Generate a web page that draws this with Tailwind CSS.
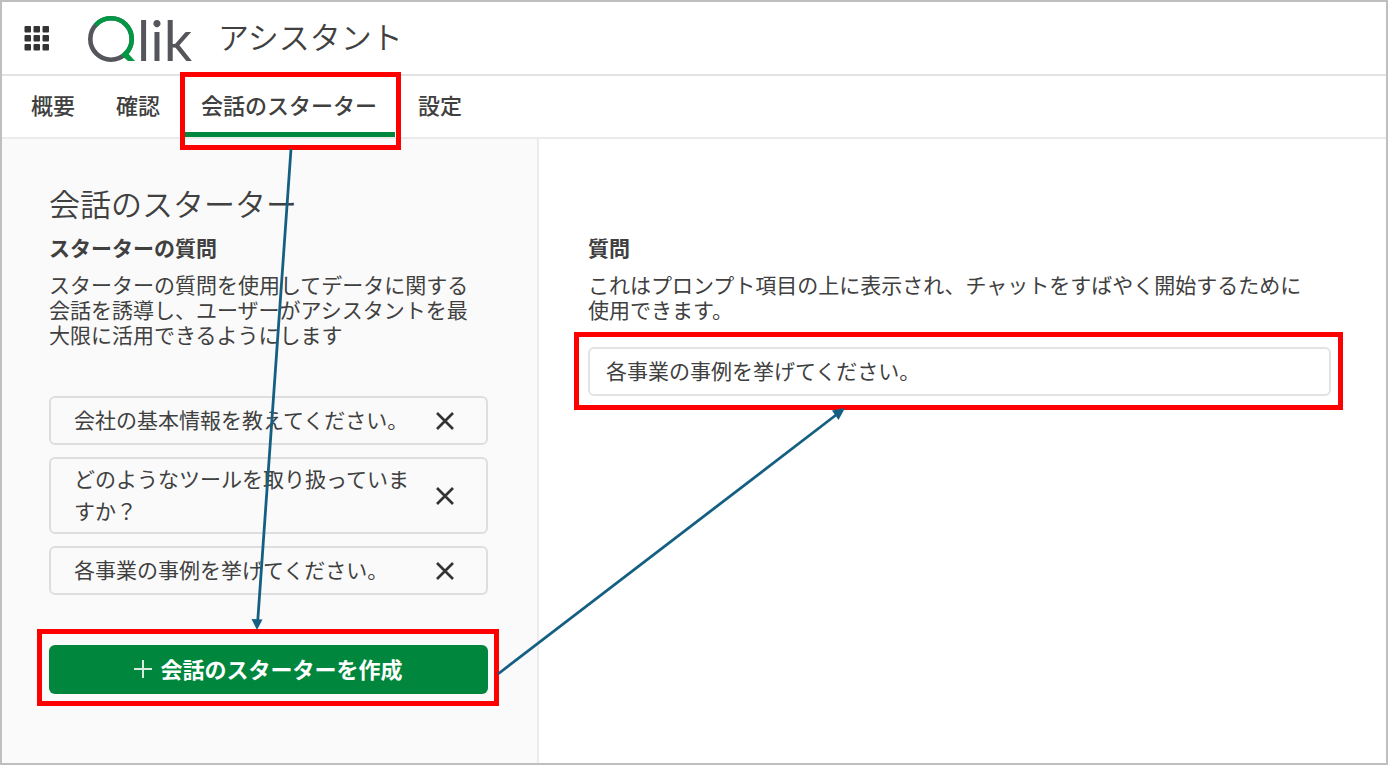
<!DOCTYPE html>
<html lang="ja">
  <head>
    <meta charset="utf-8" />
    <meta name="viewport" content="initial-scale=1, width=device-width" />
    <script src="https://cdn.jsdelivr.net/npm/@tailwindcss/browser@4"></script>
    <title>Qlik アシスタント</title>
  </head>

  <body
    class="relative flex min-h-screen flex-col border-2 border-[#bfbfbf] bg-white font-['Noto_Sans_CJK_JP',sans-serif] text-[21px] text-[#404040]"
  >
    <!-- HEADER -->
    <header
      class="flex h-[74px] items-center border-b-2 border-[#e3e3e3] pl-[22px]"
    >
      <button type="button" aria-label="メニュー">
        <svg width="26" height="26" viewBox="0 0 26 26" fill="#333">
          <rect x="0.5" y="1" width="6.5" height="6.5" rx="1" />
          <rect x="9.5" y="1" width="6.5" height="6.5" rx="1" />
          <rect x="18.5" y="1" width="6.5" height="6.5" rx="1" />
          <rect x="0.5" y="10" width="6.5" height="6.5" rx="1" />
          <rect x="9.5" y="10" width="6.5" height="6.5" rx="1" />
          <rect x="18.5" y="10" width="6.5" height="6.5" rx="1" />
          <rect x="0.5" y="19" width="6.5" height="6.5" rx="1" />
          <rect x="9.5" y="19" width="6.5" height="6.5" rx="1" />
          <rect x="18.5" y="19" width="6.5" height="6.5" rx="1" />
        </svg>
      </button>
      <a href="#" class="ml-9" aria-label="Qlik">
        <svg width="108" height="72" viewBox="0 -11 108 72" fill="none">
          <circle cx="25" cy="26" r="20.7" stroke="#54565b" stroke-width="4.6" />
          <path
            d="M9.5 12.3A20.7 20.7 0 1 1 38.5 41.7"
            stroke="#009845"
            stroke-width="4.6"
          />
          <path d="M35 42L39.5 37.5L49 48H42Z" fill="#009845" />
          <text x="51" y="48" fill="#54565b" class="font-[Lato] text-[56px]">lik</text>
        </svg>
      </a>
      <h1 class="ml-6 pb-1 text-[31px] font-[350] leading-10">アシスタント</h1>
    </header>

    <!-- TABS -->
    <nav
      class="flex h-[63px] gap-[5px] border-b-2 border-[#ebebeb] pl-[11px] text-[22px] font-medium text-[#404040]"
    >
      <a href="#" class="flex items-center px-[18px] pb-1">概要</a>
      <a href="#" class="flex items-center px-[18px] pb-1">確認</a>
      <a
        href="#"
        class="relative flex items-center px-[18px] pb-1 shadow-[inset_0_-5px_0_#00873d]"
      >
        会話のスターター
        <span
          class="absolute -top-1 -right-[6px] -bottom-[13px] -left-[3px] border-5 border-[#ff0000]"
        ></span>
      </a>
      <a href="#" class="flex items-center px-[18px] pb-1">設定</a>
    </nav>

    <div class="flex flex-1">
      <!-- STARTERS -->
      <aside
        class="w-[537px] shrink-0 border-r-2 border-[#ebebeb] bg-[#fafafa] pt-11 pr-[49px] pb-12 pl-[47px]"
      >
        <h2 class="text-[31px] font-[350] leading-10">会話のスターター</h2>
        <h3 class="mt-1 font-bold leading-10">スターターの質問</h3>
        <p class="mt-[5px] pr-2 leading-[25px]">
          スターターの質問を使用してデータに関する会話を誘導し、ユーザーがアシスタントを最大限に活用できるようにします
        </p>

        <ul class="mt-[49px] space-y-3">
          <li
            class="flex min-h-[49px] items-center rounded-md border-2 border-[#dedede] px-[23px]"
          >
            <span class="flex-1 pb-1 leading-8">会社の基本情報を教えてください。</span>
            <button
              type="button"
              class="flex w-9 justify-center"
              aria-label="削除"
            >
              <svg width="18" height="18" viewBox="0 0 18 18" stroke="#333" stroke-width="2.6">
                <path d="M1 1L17 17M17 1L1 17" />
              </svg>
            </button>
          </li>
          <li
            class="flex min-h-[77px] items-center rounded-md border-2 border-[#dedede] px-[23px]"
          >
            <span class="flex-1 pb-1 leading-8"
              >どのようなツールを取り扱っていますか？</span
            >
            <button
              type="button"
              class="flex w-9 justify-center"
              aria-label="削除"
            >
              <svg width="18" height="18" viewBox="0 0 18 18" stroke="#333" stroke-width="2.6">
                <path d="M1 1L17 17M17 1L1 17" />
              </svg>
            </button>
          </li>
          <li
            class="flex min-h-[49px] items-center rounded-md border-2 border-[#dedede] px-[23px]"
          >
            <span class="flex-1 pb-1 leading-8">各事業の事例を挙げてください。</span>
            <button
              type="button"
              class="flex w-9 justify-center"
              aria-label="削除"
            >
              <svg width="18" height="18" viewBox="0 0 18 18" stroke="#333" stroke-width="2.6">
                <path d="M1 1L17 17M17 1L1 17" />
              </svg>
            </button>
          </li>
        </ul>

        <div class="relative mt-[50px]">
          <button
            type="button"
            class="flex h-[49px] w-full items-center justify-center gap-2 rounded-md bg-[#00873d] pb-[2px] text-[22px] font-bold text-white"
          >
            <svg width="18" height="18" viewBox="0 0 18 18" stroke="#d5ecdf" stroke-width="2">
              <path d="M9 0V18M0 9H18" />
            </svg>
            会話のスターターを作成
          </button>
          <span
            class="pointer-events-none absolute -top-4 -right-[11px] -bottom-3 -left-3 border-5 border-[#ff0000]"
          ></span>
        </div>
      </aside>

      <!-- QUESTION -->
      <main class="flex-1 pt-[88px] pr-[55px] pl-[49px]">
        <label for="question" class="block font-bold leading-10">質問</label>
        <p class="mt-[5px] leading-[25px]">
          これはプロンプト項目の上に表示され、チャットをすばやく開始するために<br />使用できます。
        </p>
        <div class="relative mt-[25px]">
          <input
            type="text"
            id="question"
            value="各事業の事例を挙げてください。"
            class="block h-[49px] w-full rounded-md border-2 border-[#e3e3e3] px-4 pb-1"
          />
          <span
            class="pointer-events-none absolute -top-[15px] -right-3 -bottom-[14px] -left-[14px] border-5 border-[#ff0000]"
          ></span>
        </div>
      </main>
    </div>

    <!-- ARROWS -->
    <svg
      class="pointer-events-none absolute -top-[2px] -left-[2px]"
      width="900"
      height="700"
      viewBox="0 0 900 700"
      fill="#156082"
      stroke="#156082"
    >
      <path d="M291 149L257.8 620M498 674L836 415" stroke-width="2.8" />
      <path d="M251.5 619L262.5 619.5L257 630Z" stroke="none" />
      <path d="M832 410.5L845 408L838.5 420Z" stroke="none" />
    </svg>
  </body>
</html>
